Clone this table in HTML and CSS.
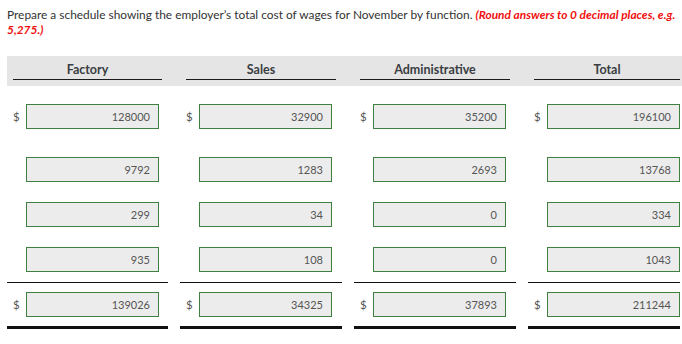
FILE: index.html
```html
<!DOCTYPE html>
<html lang="en">
<head>
<meta charset="utf-8">
<title>Schedule of wages</title>
<link rel="stylesheet" href="styles.css">
</head>
<body>
<div class="page">
  <p class="prompt">Prepare a schedule showing the employer’s total cost of wages for November by function. <span class="hint">(Round answers to 0 decimal places, e.g.</span> <span class="hint">5,275.)</span></p>
  <div class="schedule">
    <div class="head">
      <div class="grid">
        <div class="hcell"><div class="hlabel">Factory</div></div>
        <div class="hcell"><div class="hlabel">Sales</div></div>
        <div class="hcell"><div class="hlabel">Administrative</div></div>
        <div class="hcell"><div class="hlabel">Total</div></div>
      </div>
    </div>
    <div class="grid row row-first">
      <div class="cell"><span class="cur">$</span><div class="box">128000</div></div>
      <div class="cell"><span class="cur">$</span><div class="box">32900</div></div>
      <div class="cell"><span class="cur">$</span><div class="box">35200</div></div>
      <div class="cell"><span class="cur">$</span><div class="box">196100</div></div>
    </div>
    <div class="grid row row-second">
      <div class="cell"><span class="cur"></span><div class="box">9792</div></div>
      <div class="cell"><span class="cur"></span><div class="box">1283</div></div>
      <div class="cell"><span class="cur"></span><div class="box">2693</div></div>
      <div class="cell"><span class="cur"></span><div class="box">13768</div></div>
    </div>
    <div class="grid row">
      <div class="cell"><span class="cur"></span><div class="box">299</div></div>
      <div class="cell"><span class="cur"></span><div class="box">34</div></div>
      <div class="cell"><span class="cur"></span><div class="box">0</div></div>
      <div class="cell"><span class="cur"></span><div class="box">334</div></div>
    </div>
    <div class="grid row">
      <div class="cell"><span class="cur"></span><div class="box">935</div></div>
      <div class="cell"><span class="cur"></span><div class="box">108</div></div>
      <div class="cell"><span class="cur"></span><div class="box">0</div></div>
      <div class="cell"><span class="cur"></span><div class="box">1043</div></div>
    </div>
    <div class="grid total-row">
      <div class="cell total"><span class="cur">$</span><div class="box">139026</div></div>
      <div class="cell total"><span class="cur">$</span><div class="box">34325</div></div>
      <div class="cell total"><span class="cur">$</span><div class="box">37893</div></div>
      <div class="cell total"><span class="cur">$</span><div class="box">211244</div></div>
    </div>
  </div>
</div>
</body>
</html>
```
FILE: styles.css
```css
html, body {
  margin: 0;
  padding: 0;
  background: #ffffff;
}
body {
  font-family: Lato, "Open Sans", "Liberation Sans", sans-serif;
  color: #333333;
  overflow: hidden;
}
.page {
  padding: 8px 0 0 7px;
}
.prompt {
  margin: 0;
  width: 675px;
  font-size: 11.9px;
  line-height: 14.5px;
  color: #333333;
}
.hint {
  color: #f01010;
  font-weight: 700;
  font-style: italic;
}
.schedule {
  margin-top: 19px;
}
.grid {
  display: grid;
  grid-template-columns: 161px 162px 162px 152px;
  column-gap: 12px;
}
.head {
  background: #e5e5e5;
  padding: 7px 0 6px 0;
}
.hcell {
  padding: 0 6px;
}
.hcell:last-child {
  padding-right: 0;
}
.hlabel {
  text-align: center;
  font-size: 12.5px;
  font-weight: 700;
  line-height: 14px;
  color: #3a3d42;
  padding-bottom: 2px;
  border-bottom: 1px solid #1a1a1a;
}
.row {
  margin-top: 20px;
}
.row-first {
  margin-top: 18px;
}
.row-second {
  margin-top: 28px;
}
.cell {
  display: flex;
  align-items: center;
}
.cur {
  width: 13px;
  padding-left: 6px;
  font-size: 11.5px;
  color: #555555;
  flex: none;
}
.box {
  box-sizing: border-box;
  width: 133px;
  height: 25px;
  background: #ececec;
  border: 1px solid #3f7f3f;
  text-align: right;
  padding-right: 8px;
  font-size: 11px;
  line-height: 23px;
  color: #555555;
}
.total-row {
  margin-top: 10px;
}
.total {
  border-top: 1px solid #111111;
  border-bottom: 3px solid #111111;
  padding: 9px 0 9px 0;
}
```
